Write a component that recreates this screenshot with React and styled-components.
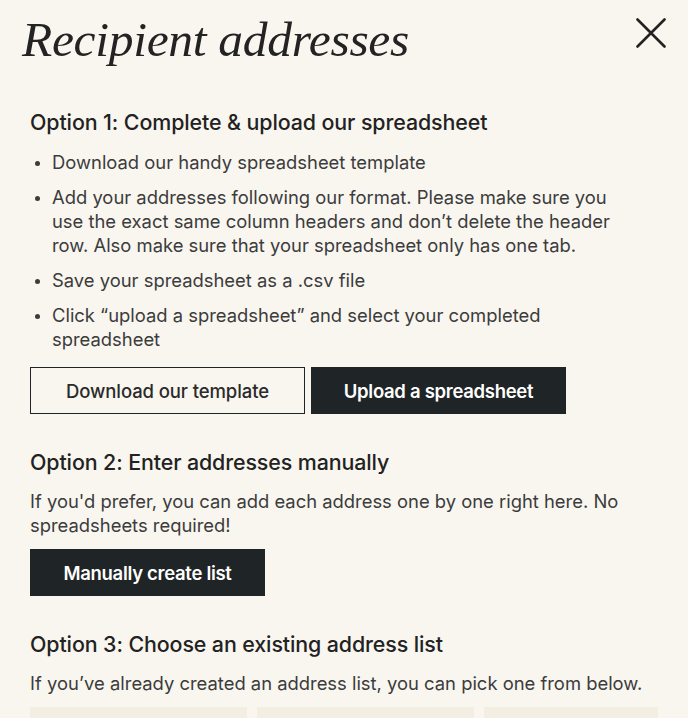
import React from "react";
import styled, { createGlobalStyle } from "styled-components";

const Global = createGlobalStyle`
  html, body { margin: 0; padding: 0; background: #f9f6f0; }
  body { font-family: Inter, "Noto Sans", sans-serif; color: #222; }
  * { box-sizing: border-box; }
`;

const Panel = styled.div`
  width: 688px;
  height: 718px;
  overflow: hidden;
  background: #f9f6f0;
  padding: 0 30px;
`;

const Header = styled.header`
  display: flex;
  justify-content: space-between;
  align-items: flex-start;
  margin: 0 -8px 0 -8px;
  padding-top: 10px;
  height: 108px;
`;

const Title = styled.h1`
  margin: 0;
  font-family: "Liberation Serif", "DejaVu Serif", serif;
  font-style: italic;
  font-weight: 400;
  font-size: 49.5px;
  line-height: 60px;
  color: #232323;
  letter-spacing: -0.3px;
`;

const Close = styled.button`
  border: 0;
  background: none;
  padding: 0;
  margin: 8px 0 0 0;
  width: 30px;
  height: 30px;
  display: flex;
  align-items: center;
  justify-content: center;
  cursor: pointer;
`;

const Section = styled.section`
  display: flex;
  flex-direction: column;
  margin-bottom: ${(p) => p.$mb || 0}px;
`;

const Heading = styled.h2`
  margin: 0 0 ${(p) => p.$mb || 13}px 0;
  font-size: 21.4px;
  line-height: 28px;
  font-weight: 500;
  color: #222;
  letter-spacing: -0.1px;
`;

const List = styled.ul`
  margin: 0 0 16px 0;
  padding: 0 26px 0 22px;
  display: flex;
  flex-direction: column;
  gap: 11px;
`;

const Item = styled.li`
  font-size: 18.4px;
  line-height: 24px;
  color: #3c3c3c;
  &::marker { font-size: 15px; }
`;

const Para = styled.p`
  margin: 0 0 12px 0;
  font-size: 18.4px;
  line-height: 24px;
  color: #3c3c3c;
`;

const Buttons = styled.div`
  display: flex;
  gap: 6px;
`;

const Button = styled.button`
  height: 47px;
  padding: 0;
  font-family: Inter, "Noto Sans", sans-serif;
  font-size: 18.5px;
  font-weight: ${(p) => (p.$primary ? 600 : 500)};
  letter-spacing: ${(p) => (p.$primary ? "-0.3px" : "-0.1px")};
  white-space: nowrap;
  border: 1.5px solid #1f2426;
  background: ${(p) => (p.$primary ? "#1f2426" : "transparent")};
  color: ${(p) => (p.$primary ? "#fff" : "#2a2a2a")};
  cursor: pointer;
  width: ${(p) => p.$w}px;
`;

const Cards = styled.div`
  display: flex;
  gap: 10px;
  overflow: hidden;
`;

const Card = styled.div`
  flex: 0 0 217px;
  height: 140px;
  background: #f3eee2;
`;

export default function App() {
  return (
    <>
      <Global />
      <Panel>
        <Header>
          <Title>Recipient addresses</Title>
          <Close aria-label="Close">
            <svg width="30" height="30" viewBox="0 0 30 30">
              <path d="M1.5 1.5 L28.5 28.5 M28.5 1.5 L1.5 28.5" stroke="#222" strokeWidth="2.6" strokeLinecap="round" />
            </svg>
          </Close>
        </Header>
        <Section $mb={34}>
          <Heading $mb={14}>Option 1: Complete &amp; upload our spreadsheet</Heading>
          <List>
            <Item>Download our handy spreadsheet template</Item>
            <Item>
              Add your addresses following our format. Please make sure you use the exact same column headers and
              don’t delete the header row. Also make sure that your spreadsheet only has one tab.
            </Item>
            <Item>Save your spreadsheet as a .csv file</Item>
            <Item>Click “upload a spreadsheet” and select your completed spreadsheet</Item>
          </List>
          <Buttons>
            <Button $w={275}>Download our template</Button>
            <Button $primary $w={255}>Upload a spreadsheet</Button>
          </Buttons>
        </Section>
        <Section $mb={34}>
          <Heading $mb={13}>Option 2: Enter addresses manually</Heading>
          <Para>If you'd prefer, you can add each address one by one right here. No spreadsheets required!</Para>
          <Buttons>
            <Button $primary $w={235}>Manually create list</Button>
          </Buttons>
        </Section>
        <Section>
          <Heading $mb={13}>Option 3: Choose an existing address list</Heading>
          <Para $mb={11}>If you’ve already created an address list, you can pick one from below.</Para>
          <Cards>
            <Card />
            <Card />
            <Card />
          </Cards>
        </Section>
      </Panel>
    </>
  );
}
